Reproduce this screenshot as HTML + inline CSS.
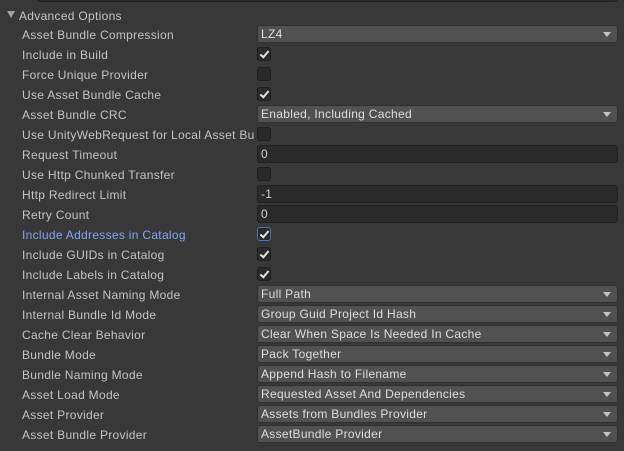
<!DOCTYPE html>
<html><head><meta charset="utf-8"><style>
*{margin:0;padding:0;box-sizing:border-box}
body{width:624px;height:451px;background:#383838;font-family:"Liberation Sans",sans-serif;font-size:12px;color:#c4c4c4;position:relative;overflow:hidden;letter-spacing:0.3px}
.topf{position:absolute;left:37px;top:-10px;width:581px;height:12px;border:1px solid #242424;border-radius:3px;background:#2a2a2a}
.hdr{position:absolute;left:19px;top:9px;color:#c4c4c4}
.tri{position:absolute;left:7px;top:11px;width:0;height:0;border-left:4px solid transparent;border-right:4px solid transparent;border-top:7px solid #a0a0a0}
.row{position:absolute;left:0;width:624px;height:20px}
.lbl{position:absolute;left:22px;top:4px;white-space:nowrap;width:233px;overflow:hidden}
.dd{position:absolute;left:257px;top:1px;width:361px;height:18px;background:#515151;border:1px solid #303030;border-radius:3px;padding-left:3px;line-height:17px;color:#dedede}
.dd:after{content:"";position:absolute;right:6px;top:6px;border-left:4px solid transparent;border-right:4px solid transparent;border-top:5px solid #c4c4c4}
.tf{position:absolute;left:257px;top:1px;width:361px;height:18px;background:#2a2a2a;border:1px solid #212121;border-radius:3px;padding-left:3px;line-height:17px;color:#d2d2d2}
.cb{position:absolute;left:257px;top:3px;width:14px;height:14px;background:#2a2a2a;border:1px solid #1f1f1f;border-radius:3px}
.cb.on:after{content:"";position:absolute;left:4px;top:1px;width:3px;height:7px;border-right:2px solid #e4e4e4;border-bottom:2px solid #e4e4e4;transform:rotate(40deg)}
.blue .lbl{color:#7baaf0}
.blue .cb{border-color:#3a79bb}
</style></head><body>
<div class="topf"></div>
<div class="tri"></div>
<div class="hdr">Advanced Options</div>

<div class="row" style="top:24px"><div class="lbl">Asset Bundle Compression</div><div class="dd">LZ4</div></div>
<div class="row" style="top:44px"><div class="lbl">Include in Build</div><div class="cb on"></div></div>
<div class="row" style="top:64px"><div class="lbl">Force Unique Provider</div><div class="cb"></div></div>
<div class="row" style="top:84px"><div class="lbl">Use Asset Bundle Cache</div><div class="cb on"></div></div>
<div class="row" style="top:104px"><div class="lbl">Asset Bundle CRC</div><div class="dd">Enabled, Including Cached</div></div>
<div class="row" style="top:124px"><div class="lbl">Use UnityWebRequest for Local Asset Bundles</div><div class="cb"></div></div>
<div class="row" style="top:144px"><div class="lbl">Request Timeout</div><div class="tf">0</div></div>
<div class="row" style="top:164px"><div class="lbl">Use Http Chunked Transfer</div><div class="cb"></div></div>
<div class="row" style="top:184px"><div class="lbl">Http Redirect Limit</div><div class="tf">-1</div></div>
<div class="row" style="top:204px"><div class="lbl">Retry Count</div><div class="tf">0</div></div>
<div class="row blue" style="top:224px"><div class="lbl">Include Addresses in Catalog</div><div class="cb on"></div></div>
<div class="row" style="top:244px"><div class="lbl">Include GUIDs in Catalog</div><div class="cb on"></div></div>
<div class="row" style="top:264px"><div class="lbl">Include Labels in Catalog</div><div class="cb on"></div></div>
<div class="row" style="top:284px"><div class="lbl">Internal Asset Naming Mode</div><div class="dd">Full Path</div></div>
<div class="row" style="top:304px"><div class="lbl">Internal Bundle Id Mode</div><div class="dd">Group Guid Project Id Hash</div></div>
<div class="row" style="top:324px"><div class="lbl">Cache Clear Behavior</div><div class="dd">Clear When Space Is Needed In Cache</div></div>
<div class="row" style="top:344px"><div class="lbl">Bundle Mode</div><div class="dd">Pack Together</div></div>
<div class="row" style="top:364px"><div class="lbl">Bundle Naming Mode</div><div class="dd">Append Hash to Filename</div></div>
<div class="row" style="top:384px"><div class="lbl">Asset Load Mode</div><div class="dd">Requested Asset And Dependencies</div></div>
<div class="row" style="top:404px"><div class="lbl">Asset Provider</div><div class="dd">Assets from Bundles Provider</div></div>
<div class="row" style="top:424px"><div class="lbl">Asset Bundle Provider</div><div class="dd">AssetBundle Provider</div></div>
</body></html>
